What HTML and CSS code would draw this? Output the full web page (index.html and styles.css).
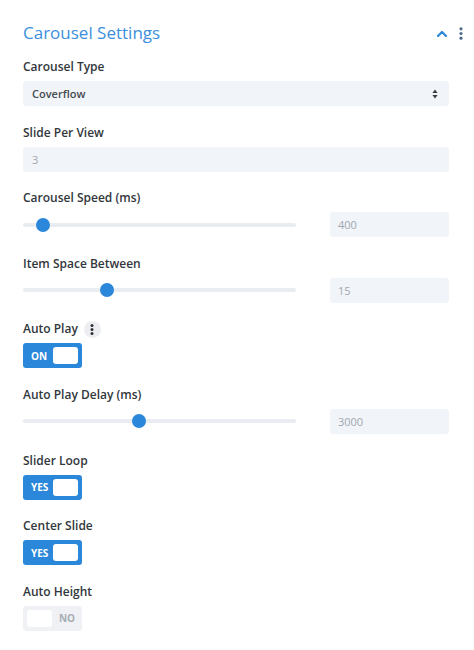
FILE: index.html
```html
<!DOCTYPE html>
<html lang="en">
<head>
<meta charset="utf-8">
<title>Carousel Settings</title>
<link rel="stylesheet" href="styles.css">
</head>
<body>
<div class="panel">
  <div class="header">
    <h2 class="title">Carousel Settings</h2>
    <div class="header-icons">
      <svg class="chev" width="10" height="7" viewBox="0 0 10 7"><path d="M1 6 L5 2 L9 6" fill="none" stroke="#2b87da" stroke-width="2.2" stroke-linecap="round" stroke-linejoin="round"/></svg>
      <svg class="kebab" width="4" height="13" viewBox="0 0 4 13"><circle cx="2" cy="1.8" r="1.6" fill="#4f6b8a"/><circle cx="2" cy="6.5" r="1.6" fill="#4f6b8a"/><circle cx="2" cy="11.2" r="1.6" fill="#4f6b8a"/></svg>
    </div>
  </div>

  <div class="field">
    <div class="label">Carousel Type</div>
    <div class="select">
      <span>Coverflow</span>
      <svg width="6" height="10" viewBox="0 0 6 10"><path d="M3 0.5 L5.6 4 H0.4 Z M3 9.5 L5.6 6 H0.4 Z" fill="#3a3f45"/></svg>
    </div>
  </div>

  <div class="field">
    <div class="label">Slide Per View</div>
    <div class="input">3</div>
  </div>

  <div class="field">
    <div class="label">Carousel Speed (ms)</div>
    <div class="slider-row">
      <div class="track"><span class="thumb" style="left: 7.3%"></span></div>
      <div class="input num">400</div>
    </div>
  </div>

  <div class="field">
    <div class="label">Item Space Between</div>
    <div class="slider-row">
      <div class="track"><span class="thumb" style="left: 30.8%"></span></div>
      <div class="input num">15</div>
    </div>
  </div>

  <div class="field">
    <div class="label">Auto Play
      <span class="more">
        <svg width="4" height="11" viewBox="0 0 4 11"><circle cx="2" cy="1.6" r="1.5" fill="#2c3035"/><circle cx="2" cy="5.5" r="1.5" fill="#2c3035"/><circle cx="2" cy="9.4" r="1.5" fill="#2c3035"/></svg>
      </span>
    </div>
    <div class="toggle on"><span class="tlabel">ON</span><span class="knob"></span></div>
  </div>

  <div class="field">
    <div class="label">Auto Play Delay (ms)</div>
    <div class="slider-row">
      <div class="track"><span class="thumb" style="left: 42.5%"></span></div>
      <div class="input num">3000</div>
    </div>
  </div>

  <div class="field">
    <div class="label">Slider Loop</div>
    <div class="toggle on"><span class="tlabel">YES</span><span class="knob"></span></div>
  </div>

  <div class="field">
    <div class="label">Center Slide</div>
    <div class="toggle on"><span class="tlabel">YES</span><span class="knob"></span></div>
  </div>

  <div class="field">
    <div class="label">Auto Height</div>
    <div class="toggle off"><span class="knob"></span><span class="tlabel">NO</span></div>
  </div>
</div>
</body>
</html>
```

FILE: styles.css
```css
* { box-sizing: border-box; }

html, body {
  margin: 0;
  padding: 0;
  background: #ffffff;
}

body {
  font-family: "Open Sans", "Noto Sans", sans-serif;
  color: #32373c;
}

.panel {
  padding: 21px 25px 0 23px;
}

.header {
  display: flex;
  align-items: center;
  justify-content: space-between;
  height: 24px;
  margin: 0 -14px 14px 0;
}

.title {
  margin: 0;
  font-size: 17px;
  line-height: 24px;
  font-weight: 400;
  color: #3c8fdc;
}

.header-icons {
  display: flex;
  align-items: center;
  gap: 12px;
}

.chev { margin-top: 1px; }

.field {
  margin-bottom: 18.6px;
}

.label {
  display: flex;
  align-items: center;
  gap: 6px;
  height: 16px;
  margin-bottom: 6px;
  font-size: 12px;
  line-height: 16px;
  font-weight: 600;
  color: #32373c;
}

.more {
  display: inline-flex;
  align-items: center;
  justify-content: center;
  width: 17px;
  height: 17px;
  border-radius: 50%;
  background: #eceef2;
}

.select {
  display: flex;
  align-items: center;
  justify-content: space-between;
  height: 25px;
  padding: 0 11px 0 9px;
  background: #f1f4f8;
  border-radius: 3px;
  font-size: 11px;
  font-weight: 600;
  color: #454a50;
}

.input {
  display: flex;
  align-items: center;
  height: 25px;
  padding: 0 9px;
  background: #f1f4f8;
  border-radius: 3px;
  font-size: 11px;
  font-weight: 400;
  color: #a2a8b0;
}

.slider-row {
  display: flex;
  align-items: center;
  gap: 34px;
}

.track {
  position: relative;
  flex: 1;
  height: 4px;
  border-radius: 2px;
  background: #e9ecf0;
}

.thumb {
  position: absolute;
  top: 50%;
  width: 14px;
  height: 14px;
  margin: -7px 0 0 -7px;
  border-radius: 50%;
  background: #2b87da;
}

.num {
  flex: 0 0 119px;
  padding-left: 8px;
}

.toggle {
  display: flex;
  align-items: center;
  justify-content: space-between;
  width: 59px;
  height: 25px;
  border-radius: 3px;
}

.toggle.on {
  background: #2b87da;
  padding: 0 4px 0 8px;
}

.toggle.off {
  background: #eff1f4;
  padding: 0 7px 0 4px;
}

.tlabel {
  font-size: 10px;
  font-weight: 700;
  line-height: 1;
  color: #ffffff;
}

.toggle.off .tlabel {
  color: #a8adb4;
}

.knob {
  width: 25px;
  height: 17px;
  border-radius: 3px;
  background: #ffffff;
}
```
